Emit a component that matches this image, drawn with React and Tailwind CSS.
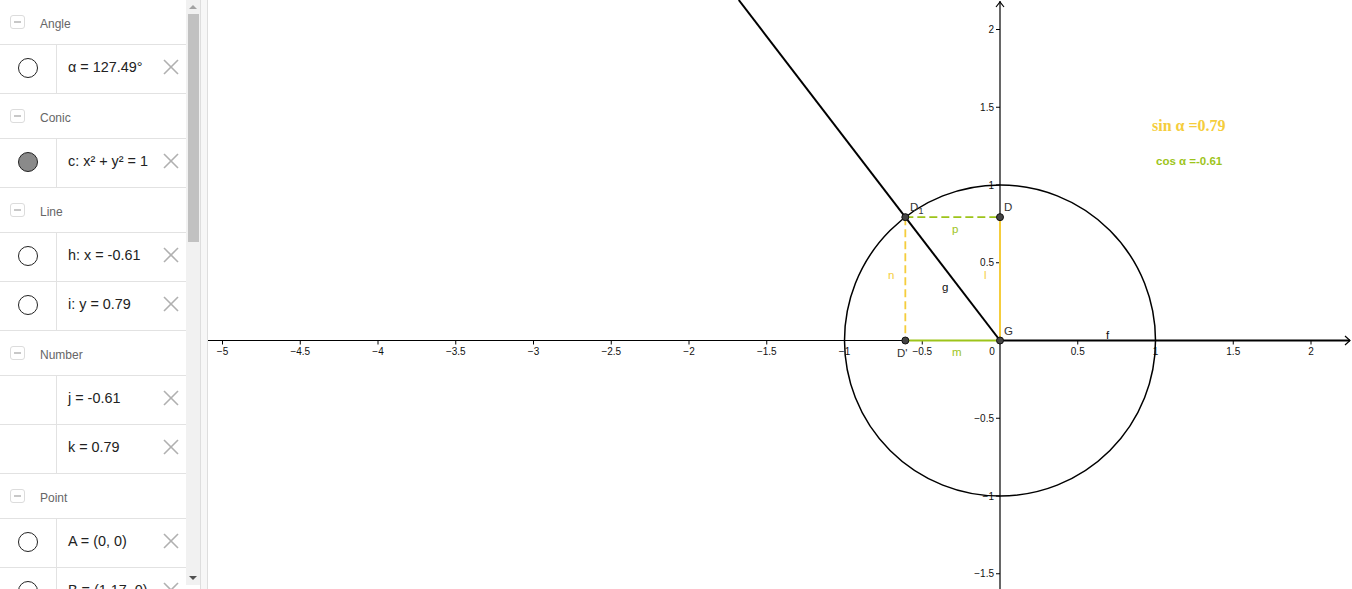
import React from "react";

const sans = { fontFamily: '"Liberation Sans", Arial, sans-serif' };

function Minus() {
  return (
    <div className="w-[15px] h-[14px] border border-[#dcdcdc] rounded-[3px] flex items-center justify-center">
      <div className="w-[7px] h-[1.5px] bg-[#c8c8c8]" />
    </div>
  );
}

function XIcon() {
  return (
    <svg width="18" height="18" viewBox="0 0 18 18" className="shrink-0">
      <line x1="2" y1="2" x2="16" y2="16" stroke="#b0b0b0" strokeWidth="1.6" />
      <line x1="16" y1="2" x2="2" y2="16" stroke="#b0b0b0" strokeWidth="1.6" />
    </svg>
  );
}

function Header({ label }) {
  return (
    <div className="h-[45px] border-b border-[#e2e2e2] flex items-center pl-[10px] shrink-0">
      <Minus />
      <span className="ml-[15px] text-[12px] text-[#666] pt-[3px]">{label}</span>
    </div>
  );
}

function Row({ marker, text }) {
  return (
    <div className="h-[49px] border-b border-[#e2e2e2] flex shrink-0">
      <div className="w-[57px] border-r border-[#e2e2e2] flex items-center justify-center shrink-0">
        {marker === "empty" && (
          <div className="w-[20px] h-[20px] rounded-full border border-[#222] bg-white -mt-[2px]" />
        )}
        {marker === "filled" && (
          <div className="w-[20px] h-[20px] rounded-full border border-[#222] bg-[#8a8a8a] -mt-[2px]" />
        )}
      </div>
      <div className="flex-1 flex items-center pl-[11px] pr-[6px] justify-between">
        <span className="text-[14.4px] text-[#222] whitespace-nowrap -mt-[3px]">{text}</span>
        <div className="-mt-[4px]">
          <XIcon />
        </div>
      </div>
    </div>
  );
}

function Sidebar() {
  return (
    <div className="w-[200px] h-[589px] flex shrink-0 bg-white" style={sans}>
      <div className="w-[186px] h-full overflow-hidden flex flex-col">
        <Header label="Angle" />
        <Row marker="empty" text="α = 127.49°" />
        <Header label="Conic" />
        <Row marker="filled" text="c: x² + y² = 1" />
        <Header label="Line" />
        <Row marker="empty" text="h: x = -0.61" />
        <Row marker="empty" text="i: y = 0.79" />
        <Header label="Number" />
        <Row marker="none" text="j = -0.61" />
        <Row marker="none" text="k = 0.79" />
        <Header label="Point" />
        <Row marker="empty" text="A = (0, 0)" />
        <Row marker="empty" text="B = (1.17, 0)" />
      </div>
      <div className="w-[14px] h-[585px] bg-[#f1f1f1] flex flex-col items-center">
        <div className="h-[14px] w-full flex items-center justify-center">
          <div className="w-0 h-0 border-l-[4px] border-r-[4px] border-b-[4px] border-l-transparent border-r-transparent border-b-[#a3a3a3]" />
        </div>
        <div className="w-[11px] h-[228px] bg-[#c1c1c1]" />
        <div className="flex-1" />
        <div className="h-[14px] w-full flex items-center justify-center">
          <div className="w-0 h-0 border-l-[4px] border-r-[4px] border-t-[4px] border-l-transparent border-r-transparent border-t-[#505050]" />
        </div>
      </div>
    </div>
  );
}

const S = 155.5;
const OX = 1000;
const OY = 340.5;
const px = (v) => OX + v * S;
const py = (v) => OY - v * S;

function Canvas() {
  const xt = [-5, -4.5, -4, -3.5, -3, -2.5, -2, -1.5, -1, -0.5, 0.5, 1, 1.5, 2];
  const yt = [2, 1.5, 1, 0.5, -0.5, -1, -1.5];
  const fmt = (v) => (v < 0 ? "\u2212" + Math.abs(v) : String(v));
  const cx = -0.6088;
  const sy = 0.7934;
  const d1x = px(cx);
  const d1y = py(sy);
  const slope = -cx / sy;
  const topX = OX - OY * slope;
  const yellow = "#f5cd3c";
  const green = "#9dc41a";
  return (
    <div className="flex-1 h-[589px] bg-white overflow-hidden">
      <svg width="1144" height="589" viewBox="208 0 1144 589" style={sans}>
        <line x1="208" y1={OY} x2="1350" y2={OY} stroke="#000" strokeWidth="1.2" />
        <polyline points={`1345,${OY - 4.5} 1350,${OY} 1345,${OY + 4.5}`} fill="none" stroke="#000" strokeWidth="1.2" />
        <line x1={OX} y1="1" x2={OX} y2="589" stroke="#000" strokeWidth="1.2" />
        <polyline points={`${OX - 4},7 ${OX},2 ${OX + 4},7`} fill="none" stroke="#000" strokeWidth="1.2" />
        {xt.map((v) => (
          <g key={"x" + v}>
            <line x1={px(v)} y1={OY} x2={px(v)} y2={OY + 4} stroke="#000" strokeWidth="1" />
            <text x={px(v)} y={OY + 14} fontSize="10" textAnchor="middle" fill="#111">
              {fmt(v)}
            </text>
          </g>
        ))}
        <text x={OX - 8} y={OY + 14} fontSize="10" textAnchor="middle" fill="#111">0</text>
        {yt.map((v) => (
          <g key={"y" + v}>
            <line x1={OX - 4} y1={py(v)} x2={OX} y2={py(v)} stroke="#000" strokeWidth="1" />
            <text x={OX - 6} y={py(v) + 3.5} fontSize="10" textAnchor="end" fill="#111">
              {fmt(v)}
            </text>
          </g>
        ))}
        <circle cx={OX} cy={OY} r={S} fill="none" stroke="#000" strokeWidth="1.5" />
        <line x1={OX} y1={OY} x2="1350" y2={OY} stroke="#000" strokeWidth="1.8" />
        <line x1={topX} y1="0" x2={OX} y2={OY} stroke="#000" strokeWidth="2" />
        <line x1={d1x} y1={d1y} x2={OX} y2={d1y} stroke={green} strokeWidth="1.8" strokeDasharray="8 4" />
        <line x1={d1x} y1={d1y} x2={d1x} y2={OY} stroke={yellow} strokeWidth="1.8" strokeDasharray="8 4" />
        <line x1={OX} y1={d1y} x2={OX} y2={OY} stroke={yellow} strokeWidth="2" />
        <line x1={d1x} y1={OY} x2={OX} y2={OY} stroke={green} strokeWidth="2" />
        {[
          [d1x, d1y],
          [OX, d1y],
          [OX, OY],
          [d1x, OY],
        ].map(([x, y], i) => (
          <circle key={i} cx={x} cy={y} r="3.5" fill="#444" stroke="#111" strokeWidth="1" />
        ))}
        <text x="910" y="211" fontSize="11.5" fill="#333">D</text>
        <text x="918.5" y="214" fontSize="9" fill="#333">1</text>
        <text x="1004" y="211" fontSize="11.5" fill="#333">D</text>
        <text x="1004" y="335" fontSize="11.5" fill="#333">G</text>
        <text x="897" y="357" fontSize="11.5" fill="#333">D'</text>
        <text x="942" y="291" fontSize="11.5" fill="#111">g</text>
        <text x="952" y="233" fontSize="11.5" fill={green}>p</text>
        <text x="888" y="279" fontSize="11.5" fill={yellow}>n</text>
        <text x="984" y="279" fontSize="11.5" fill={yellow}>l</text>
        <text x="952" y="356" fontSize="11.5" fill={green}>m</text>
        <text x="1106" y="339" fontSize="11.5" fill="#111">f</text>
        <text x="1152" y="131" fontSize="16" fontWeight="bold" fill={yellow} style={{ fontFamily: '"Liberation Serif", serif' }}>
          sin α =0.79
        </text>
        <text x="1156" y="165" fontSize="11.5" fontWeight="bold" fill={green}>
          cos α =-0.61
        </text>
      </svg>
    </div>
  );
}

export default function App() {
  return (
    <div className="w-[1352px] h-[589px] flex overflow-hidden bg-white">
      <Sidebar />
      <div className="w-[8px] h-[589px] border-l border-r border-[#dedede] bg-[#f7f7f7] shrink-0" />
      <Canvas />
    </div>
  );
}
